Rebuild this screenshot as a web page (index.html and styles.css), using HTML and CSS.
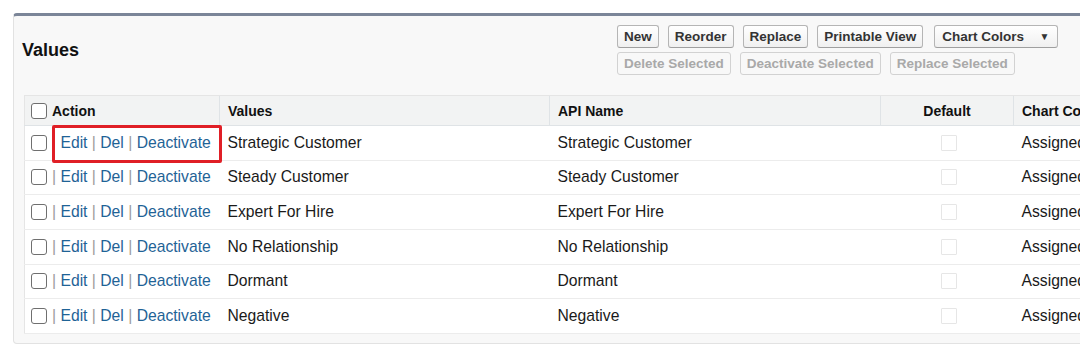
FILE: index.html
```html
<!DOCTYPE html>
<html>
<head>
<meta charset="utf-8">
<link rel="stylesheet" href="styles.css">
</head>
<body>
<div class="panel">
  <div class="panel-head">
    <h2 class="title">Values</h2>
    <div class="buttons">
      <div class="btn-row">
        <button class="btn">New</button>
        <button class="btn">Reorder</button>
        <button class="btn">Replace</button>
        <button class="btn">Printable View</button>
        <button class="btn btn-menu"><span>Chart Colors</span><span class="caret">&#9660;</span></button>
      </div>
      <div class="btn-row">
        <button class="btn disabled">Delete Selected</button>
        <button class="btn disabled">Deactivate Selected</button>
        <button class="btn disabled">Replace Selected</button>
      </div>
    </div>
  </div>
  <table class="grid">
    <colgroup>
      <col class="c-action"><col class="c-values"><col class="c-api"><col class="c-default"><col class="c-chart">
    </colgroup>
    <thead>
      <tr>
        <th><span class="cb"></span>Action</th>
        <th>Values</th>
        <th>API Name</th>
        <th class="center">Default</th>
        <th>Chart Colors</th>
      </tr>
    </thead>
    <tbody>
      <tr>
        <td class="act"><span class="cb"></span><span class="links"><span class="pipe">|</span> <a>Edit</a> <span class="pipe">|</span> <a>Del</a> <span class="pipe">|</span> <a>Deactivate</a></span><span class="highlight"></span></td>
        <td>Strategic Customer</td><td>Strategic Customer</td><td class="center"><span class="cb-faint"></span></td><td>Assigned dynamically</td>
      </tr>
      <tr>
        <td class="act"><span class="cb"></span><span class="links"><span class="pipe">|</span> <a>Edit</a> <span class="pipe">|</span> <a>Del</a> <span class="pipe">|</span> <a>Deactivate</a></span></td>
        <td>Steady Customer</td><td>Steady Customer</td><td class="center"><span class="cb-faint"></span></td><td>Assigned dynamically</td>
      </tr>
      <tr>
        <td class="act"><span class="cb"></span><span class="links"><span class="pipe">|</span> <a>Edit</a> <span class="pipe">|</span> <a>Del</a> <span class="pipe">|</span> <a>Deactivate</a></span></td>
        <td>Expert For Hire</td><td>Expert For Hire</td><td class="center"><span class="cb-faint"></span></td><td>Assigned dynamically</td>
      </tr>
      <tr>
        <td class="act"><span class="cb"></span><span class="links"><span class="pipe">|</span> <a>Edit</a> <span class="pipe">|</span> <a>Del</a> <span class="pipe">|</span> <a>Deactivate</a></span></td>
        <td>No Relationship</td><td>No Relationship</td><td class="center"><span class="cb-faint"></span></td><td>Assigned dynamically</td>
      </tr>
      <tr>
        <td class="act"><span class="cb"></span><span class="links"><span class="pipe">|</span> <a>Edit</a> <span class="pipe">|</span> <a>Del</a> <span class="pipe">|</span> <a>Deactivate</a></span></td>
        <td>Dormant</td><td>Dormant</td><td class="center"><span class="cb-faint"></span></td><td>Assigned dynamically</td>
      </tr>
      <tr>
        <td class="act"><span class="cb"></span><span class="links"><span class="pipe">|</span> <a>Edit</a> <span class="pipe">|</span> <a>Del</a> <span class="pipe">|</span> <a>Deactivate</a></span></td>
        <td>Negative</td><td>Negative</td><td class="center"><span class="cb-faint"></span></td><td>Assigned dynamically</td>
      </tr>
    </tbody>
  </table>
</div>
</body>
</html>
```
FILE: styles.css
```css
html, body {
  margin: 0;
  padding: 0;
  background: #ffffff;
  overflow: hidden;
  width: 1080px;
  height: 356px;
}
body {
  font-family: "Liberation Sans", Arial, sans-serif;
  color: #222;
  padding: 13px 0 0 13px;
  box-sizing: border-box;
}
.panel {
  width: 1120px;
  background: #f8f8f8;
  border: 1px solid #e2e2e2;
  border-top: 3px solid #7b8598;
  border-radius: 4px;
  padding: 9px 0 9px 10px;
  box-sizing: border-box;
}
.panel-head {
  display: flex;
  align-items: flex-start;
  height: 70px;
}
.title {
  margin: 0 0 0 -2px;
  width: 595px;
  font-size: 18px;
  font-weight: bold;
  color: #111;
  padding-top: 15px;
}
.buttons {
  display: flex;
  flex-direction: column;
  gap: 4px;
}
.btn-row {
  display: flex;
  gap: 9px;
}
.btn {
  font-family: "Liberation Sans", Arial, sans-serif;
  font-size: 13.5px;
  font-weight: bold;
  color: #333;
  height: 23px;
  padding: 0 6px;
  border: 1px solid #b5b5b5;
  border-bottom-color: #9f9f9f;
  border-radius: 3px;
  background: linear-gradient(#ffffff, #f0f0f0);
  box-sizing: border-box;
  line-height: 21px;
  white-space: nowrap;
}
.btn-menu {
  margin-left: 2px;
  padding: 0 8px 0 7px;
  width: 124px;
  display: flex;
  justify-content: space-between;
  align-items: center;
}
.caret {
  font-size: 10px;
  line-height: 10px;
}
.btn.disabled {
  color: #a9a9a9;
  border-color: #d2d2d2;
  background: #f8f8f8;
}
.grid {
  border-collapse: collapse;
  table-layout: fixed;
  width: 1195px;
  background: #ffffff;
  font-size: 15.7px;
}
.c-action { width: 195px; }
.c-values { width: 330px; }
.c-api { width: 331px; }
.c-default { width: 133px; }
.c-chart { width: 206px; }
.grid th {
  background: #f2f3f3;
  font-size: 14px;
  font-weight: bold;
  text-align: left;
  color: #111;
  height: 30px;
  padding: 0 8px;
  border-top: 1px solid #e5e5e5;
  border-bottom: 1px solid #dfe3e6;
  border-left: 1px solid #dfe3e6;
  white-space: nowrap;
  overflow: hidden;
  box-sizing: border-box;
}
.grid th:first-child {
  border-left: 1px solid #e5e5e5;
  padding-left: 6px;
}
.grid td {
  height: 34.67px;
  padding: 0 8px;
  border-bottom: 1px solid #ececec;
  white-space: nowrap;
  overflow: hidden;
  box-sizing: border-box;
  color: #1a1a1a;
}
.grid td:first-child {
  border-left: 1px solid #e5e5e5;
}
.grid .center { text-align: center; }
.grid td.act {
  padding-left: 6px;
  position: relative;
  overflow: visible;
}
.cb {
  display: inline-block;
  width: 14px;
  height: 14px;
  border: 1px solid #6f6f6f;
  border-radius: 3px;
  background: #fff;
  vertical-align: -3px;
  margin-right: 5px;
}
.cb-faint {
  display: inline-block;
  width: 14px;
  height: 14px;
  border: 1px solid #e6e6e6;
  border-radius: 1px;
  vertical-align: -3px;
  margin-left: 4px;
}
.links a {
  color: #1f6396;
  text-decoration: none;
}
.pipe {
  color: #9a9a9a;
}
.highlight {
  position: absolute;
  left: 27px;
  top: -1px;
  width: 170px;
  height: 38px;
  border: 3px solid #e01f26;
  border-radius: 2px;
  box-sizing: border-box;
  pointer-events: none;
}
.grid tbody tr:first-child .links .pipe:first-child {
  visibility: hidden;
}
```
